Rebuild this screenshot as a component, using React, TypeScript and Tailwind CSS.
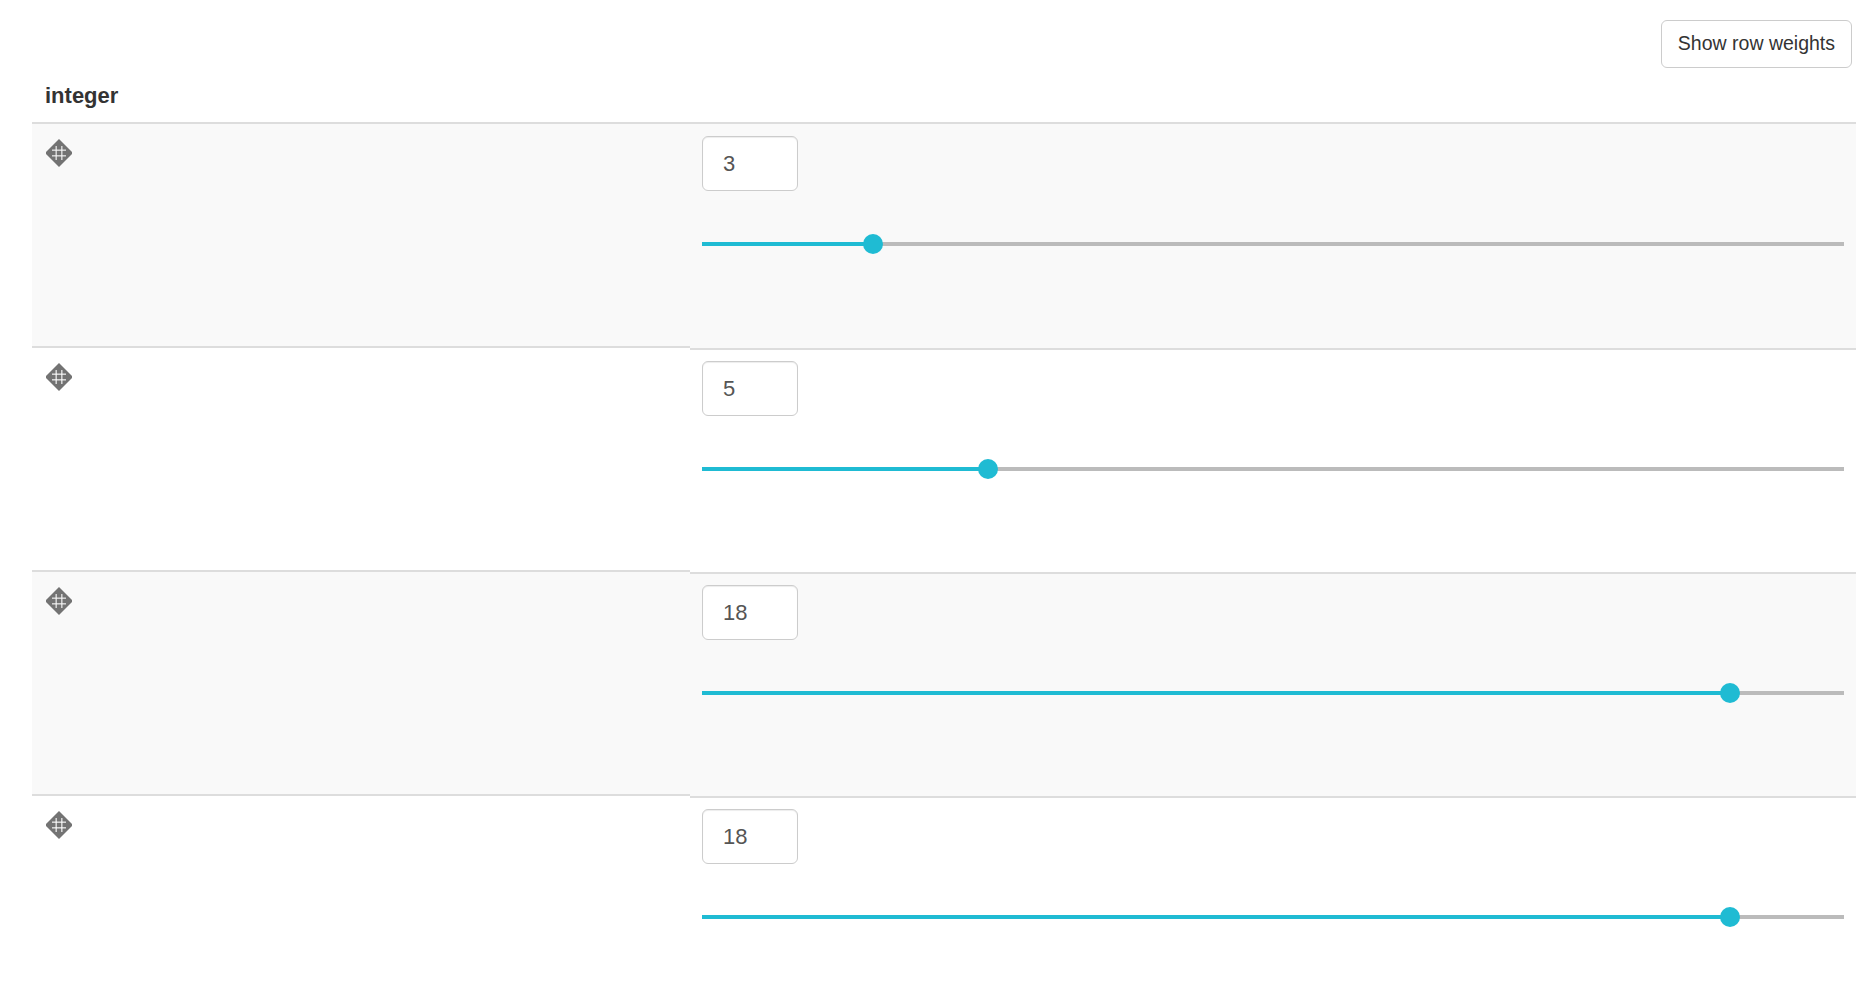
import React from "react";

const rows = [3, 5, 18, 18];

function MoveIcon({ bg }: { bg: string }) {
    return (
        <svg width="28" height="28" viewBox="0 0 28 28">
            <polygon points="14,0 27,13 27,15 14,28 1,15 1,13" fill="#737373" />
            <rect x="10.6" y="7" width="1.1" height="14" fill={bg} />
            <rect x="16.3" y="7" width="1.1" height="14" fill={bg} />
            <rect x="7" y="10.6" width="14" height="1.1" fill={bg} />
            <rect x="7" y="16.3" width="14" height="1.1" fill={bg} />
        </svg>
    );
}

function Slider({ value }: { value: number }) {
    const pct = (value / 20) * 100;
    return (
        <div className="relative h-[20px] flex items-center">
            <div className="h-[4px] w-full bg-[#bbbbbb]">
                <div
                    className="h-full bg-[#1fbbd3]"
                    style={{ width: `${pct}%` }}
                />
            </div>
            <div
                className="absolute top-0 w-[20px] h-[20px] -ml-[10px] rounded-full bg-[#1fbbd3]"
                style={{ left: `${pct}%` }}
            />
        </div>
    );
}

function Row({ value, idx }: { value: number; idx: number }) {
    const striped = idx % 2 == 0;
    const first = idx == 0;
    const prevBg = striped ? "border-white" : "border-[#f9f9f9]";
    return (
        <div className={`flex ${striped ? "bg-[#f9f9f9]" : "bg-white"}`}>
            <div
                className={`w-[658px] shrink-0 pl-[13px] pt-[15px] ${
                    first ? "h-[222px]" : "h-[224px] border-t-2 border-[#ddd]"
                }`}
            >
                <MoveIcon bg={striped ? "#f9f9f9" : "#ffffff"} />
            </div>
            <div className={`flex-1 ${first ? "" : `border-t-2 ${prevBg}`}`}>
                <div
                    className={`h-full px-[12px] ${
                        first ? "pt-[12px]" : "pt-[11px] border-t-2 border-[#ddd]"
                    }`}
                >
                    <input
                        readOnly
                        value={value}
                        className="block w-[96px] h-[55px] px-[20px] bg-white border-[1.5px] border-[#ccc] rounded-[6px] text-[22px] text-[#555] shadow-[inset_0_1px_1px_rgba(0,0,0,0.075)] outline-none"
                    />
                    <div className="mt-[43px]">
                        <Slider value={value} />
                    </div>
                </div>
            </div>
        </div>
    );
}

export default function App() {
    return (
        <div className="min-h-screen bg-white font-['Liberation_Sans',Arial,sans-serif]">
            <div className="flex justify-end pt-[20px] pr-[22px]">
                <button className="h-[48px] px-[16px] bg-white border-[1.5px] border-[#ccc] rounded-[6px] text-[19.5px] text-[#333]">
                    Show row weights
                </button>
            </div>
            <div className="ml-[32px] mr-[18px]">
                <div className="h-[56px] flex items-center pl-[13px] border-b-2 border-[#ddd] font-bold text-[22px] text-[#333]">
                    integer
                </div>
                {rows.map((v, i) => (
                    <Row key={i} value={v} idx={i} />
                ))}
            </div>
        </div>
    );
}
